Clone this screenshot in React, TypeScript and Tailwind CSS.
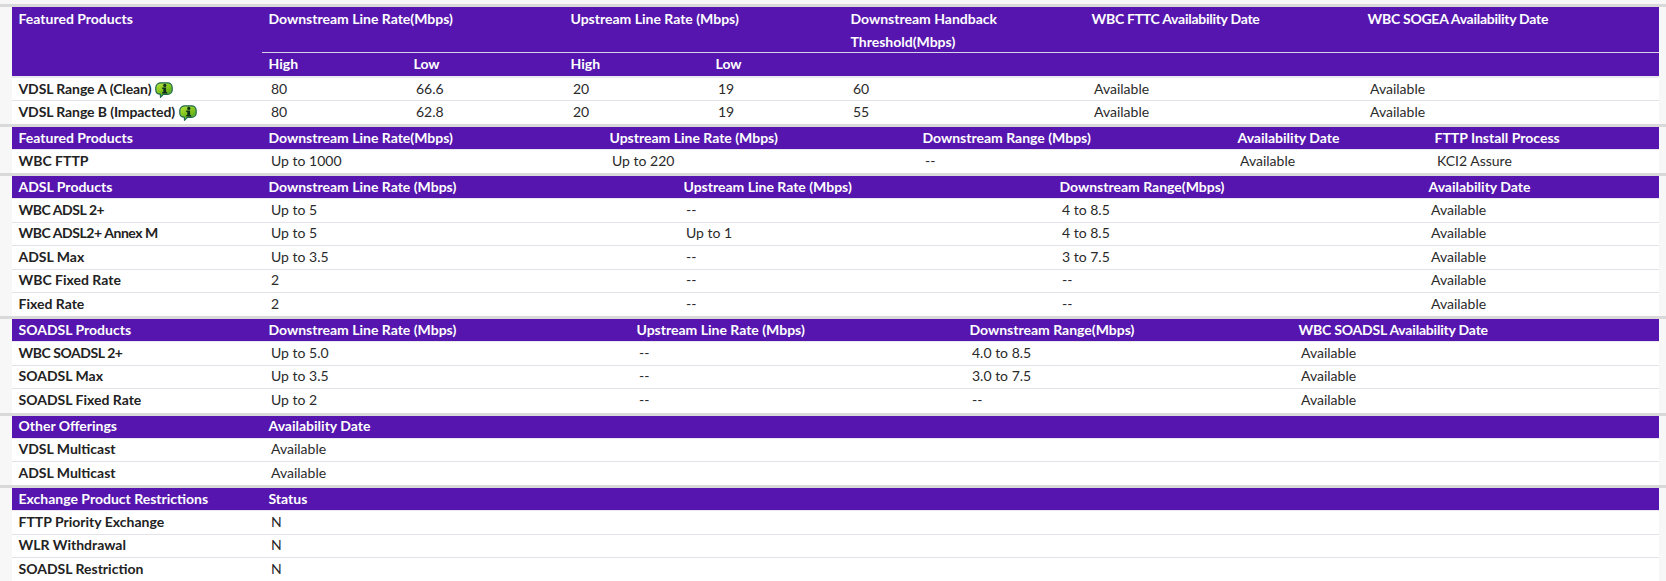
function InfoIcon() {
  return (
    <svg width="18" height="16" viewBox="0 0 18 16" className="ml-1 shrink-0">
      <defs>
        <linearGradient id="bubble" x1="0.2" y1="0" x2="0.8" y2="1">
          <stop offset="0" stopColor="#b5e23a" />
          <stop offset="0.6" stopColor="#74bb1a" />
          <stop offset="1" stopColor="#3f9a3c" />
        </linearGradient>
      </defs>
      <path
        d="M6 .8h6.500c2.700 0 4.700 2 4.700 4.600v2.500c0 2.600-2 4.500-4.700 4.500H8.500L5.500 15.200 5.300 12.200C2.700 12 .8 10.200 .8 7.900V5.400C.8 2.800 3.200 .8 6 .8Z"
        fill="url(#bubble)"
        stroke="#1f6a52"
        strokeWidth="1.200"
      />
      <circle cx="9.800" cy="3.400" r="1.600" fill="#0f2f1c" />
      <path d="M7.200 5.600h3.900v4.400h1v1.500H7.200V10h1.100V7.100H7.200Z" fill="#0f2f1c" />
    </svg>
  );
}

const rowClass = 'grid h-[23.4px] items-center border-b border-[#e2e3e8] bg-white last:border-b-0';
const headClass = 'grid h-[22px] items-center bg-[#5515ae] pb-[2px] font-bold text-white';
const cellClass = 'truncate pb-[2px] pl-[9px]';
const thClass = 'truncate pl-[6.5px]';

function Band() {
  return <div className="h-[3px] bg-[#d9d9d9]" />;
}

function Section({
  cols,
  head,
  rows,
}: {
  cols: string;
  head: string[];
  rows: string[][];
}) {
  return (
    <div className="ml-3 mr-[7px]">
      <div className={`${headClass} ${cols}`}>
        {head.map((h) => (
          <div key={h} className={h.startsWith('WBC') ? `${thClass} tracking-[-0.2px]` : thClass}>
            {h}
          </div>
        ))}
      </div>
      <div className="h-[1px] bg-[#e8e8ee]" />
      {rows.map((r) => (
        <div key={r[0]} className={`${rowClass} ${cols}`}>
          {r.map((c, i) =>
            i === 0 ? (
              <div
                key={i}
                className={`truncate pb-[2px] pl-[6.5px] font-bold text-[#222] ${
                  /^WBC .*ADSL/.test(c) ? 'tracking-[-0.45px]' : ''
                }`}
              >
                {c}
              </div>
            ) : (
              <div key={i} className={cellClass}>
                {c}
              </div>
            ),
          )}
        </div>
      ))}
    </div>
  );
}

const vdslCols = 'grid-cols-[250px_145px_157px_145px_135px_241px_276px_298px]';

function VdslSection() {
  const rows = [
    ['VDSL Range A (Clean)', '80', '66.6', '20', '19', '60', 'Available', 'Available'],
    ['VDSL Range B (Impacted)', '80', '62.8', '20', '19', '55', 'Available', 'Available'],
  ];
  return (
    <div className="ml-3 mr-[7px]">
      <div className={`grid h-[69px] grid-rows-[46px_23px] bg-[#5515ae] font-bold text-white ${vdslCols}`}>
        <div className="row-span-2 pl-[6.5px] leading-[23px]">Featured Products</div>
        <div className="col-span-2 border-b border-[#d8d3ea] pl-[6.5px] leading-[23px]">Downstream Line Rate(Mbps)</div>
        <div className="col-span-2 border-b border-[#d8d3ea] pl-[6.5px] leading-[23px]">Upstream Line Rate (Mbps)</div>
        <div className="border-b border-[#d8d3ea] pl-[6.5px] leading-[23px]">
          Downstream Handback
          <br />
          Threshold(Mbps)
        </div>
        <div className="border-b border-[#d8d3ea] pl-[6.5px] leading-[23px] tracking-[-0.27px]">WBC FTTC Availability Date</div>
        <div className="border-b border-[#d8d3ea] pl-[6.5px] leading-[23px] tracking-[-0.27px]">WBC SOGEA Availability Date</div>
        <div className="flex items-center pb-[2px] pl-[6.5px]">High</div>
        <div className="flex items-center pb-[2px] pl-[6.5px]">Low</div>
        <div className="flex items-center pb-[2px] pl-[6.5px]">High</div>
        <div className="flex items-center pb-[2px] pl-[6.5px]">Low</div>
        <div className="col-span-3" />
      </div>
      <div className="h-[2px] bg-[#e8e8ee]" />
      {rows.map((r) => (
        <div key={r[0]} className={`grid h-[23px] items-center border-b border-[#e2e3e8] bg-white last:border-b-0 ${vdslCols}`}>
          <div className="flex items-center pl-[6.5px] font-bold tracking-[-0.1px] text-[#222]">
            <span className="pb-[2px]">{r[0]}</span>
            <InfoIcon />
          </div>
          {r.slice(1).map((c, i) => (
            <div key={i} className={cellClass}>
              {c}
            </div>
          ))}
        </div>
      ))}
    </div>
  );
}

export default function App() {
  return (
    <div className="h-[581px] overflow-hidden bg-[#f7f7f7] pt-1 font-['Lato','Liberation_Sans',sans-serif] text-[14px] text-[#2a2a2a]">
      <Band />
      <VdslSection />
      <Band />
      <Section
        cols="grid-cols-[250px_341px_313px_315px_197px_231px]"
        head={['Featured Products', 'Downstream Line Rate(Mbps)', 'Upstream Line Rate (Mbps)', 'Downstream Range (Mbps)', 'Availability Date', 'FTTP Install Process']}
        rows={[['WBC FTTP', 'Up to 1000', 'Up to 220', '--', 'Available', 'KCI2 Assure']]}
      />
      <Band />
      <Section
        cols="grid-cols-[250px_415px_376px_369px_237px]"
        head={['ADSL Products', 'Downstream Line Rate (Mbps)', 'Upstream Line Rate (Mbps)', 'Downstream Range(Mbps)', 'Availability Date']}
        rows={[
          ['WBC ADSL 2+', 'Up to 5', '--', '4 to 8.5', 'Available'],
          ['WBC ADSL2+ Annex M', 'Up to 5', 'Up to 1', '4 to 8.5', 'Available'],
          ['ADSL Max', 'Up to 3.5', '--', '3 to 7.5', 'Available'],
          ['WBC Fixed Rate', '2', '--', '--', 'Available'],
          ['Fixed Rate', '2', '--', '--', 'Available'],
        ]}
      />
      <Band />
      <Section
        cols="grid-cols-[250px_368px_333px_329px_367px]"
        head={['SOADSL Products', 'Downstream Line Rate (Mbps)', 'Upstream Line Rate (Mbps)', 'Downstream Range(Mbps)', 'WBC SOADSL Availability Date']}
        rows={[
          ['WBC SOADSL 2+', 'Up to 5.0', '--', '4.0 to 8.5', 'Available'],
          ['SOADSL Max', 'Up to 3.5', '--', '3.0 to 7.5', 'Available'],
          ['SOADSL Fixed Rate', 'Up to 2', '--', '--', 'Available'],
        ]}
      />
      <Band />
      <Section
        cols="grid-cols-[250px_1fr]"
        head={['Other Offerings', 'Availability Date']}
        rows={[
          ['VDSL Multicast', 'Available'],
          ['ADSL Multicast', 'Available'],
        ]}
      />
      <Band />
      <Section
        cols="grid-cols-[250px_1fr]"
        head={['Exchange Product Restrictions', 'Status']}
        rows={[
          ['FTTP Priority Exchange', 'N'],
          ['WLR Withdrawal', 'N'],
          ['SOADSL Restriction', 'N'],
        ]}
      />
    </div>
  );
}
